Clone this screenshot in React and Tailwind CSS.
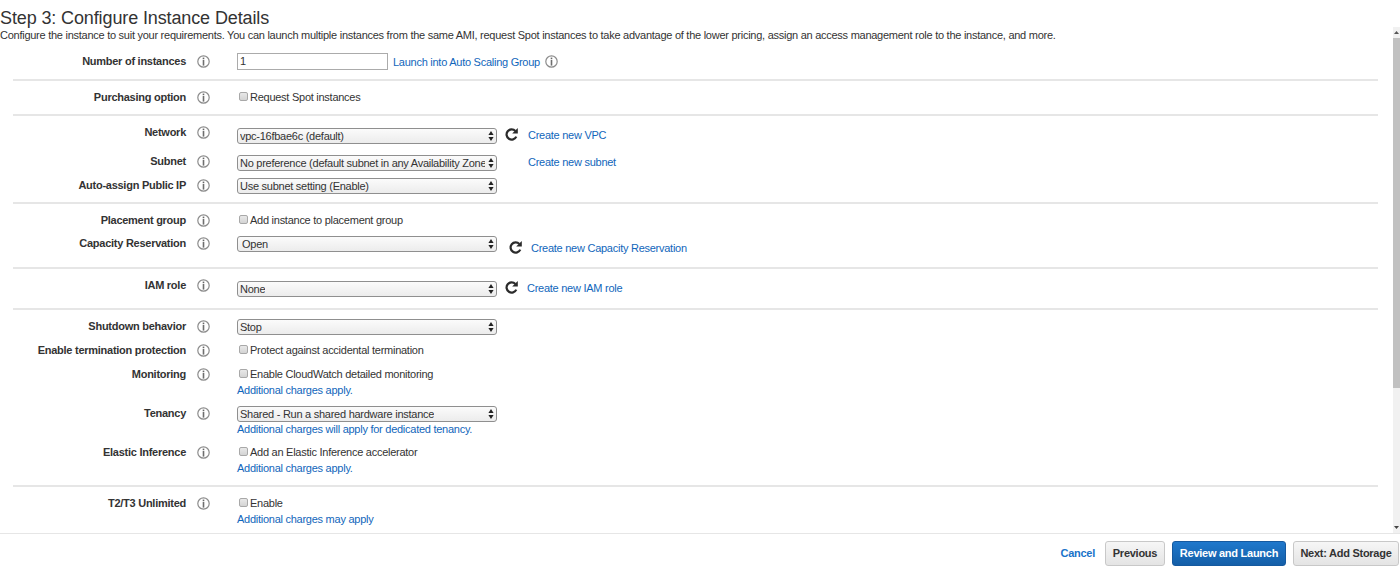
const ff = "font-['Liberation_Sans',Arial,sans-serif]";
const small = 'text-[11px] tracking-[-0.26px]';

function Info({ className = '' }) {
  return (
    <svg width="13" height="13" viewBox="0 0 13 13" className={`shrink-0 ${className}`}>
      <circle cx="6.5" cy="6.5" r="5.7" fill="#fff" stroke="#8c8c8c" strokeWidth="1.2" />
      <rect x="5.7" y="2.6" width="1.6" height="1.6" fill="#666" />
      <rect x="5.7" y="5" width="1.6" height="5.6" fill="#6e6e6e" />
    </svg>
  );
}

function Refresh({ className = '' }) {
  return (
    <svg width="15" height="15" viewBox="0 0 15 15" className={`shrink-0 ${className}`} fill="none">
      <path d="M12.3 9.6A5.1 5.1 0 1 1 11.4 4" stroke="#2b2b2b" strokeWidth="2.2" />
      <path d="M13.8 1v5.6H8.2z" fill="#2b2b2b" />
    </svg>
  );
}

function Row({ label, className = '', children }) {
  return (
    <div className={`flex items-start ${className}`}>
      <div className={`w-[173px] shrink-0 text-right font-bold leading-4 text-[#333] ${small}`}>{label}</div>
      <div className="w-[51px] shrink-0 pt-[2px] pl-[11px]"><Info /></div>
      <div className="min-w-0 flex-1">{children}</div>
    </div>
  );
}

function Check({ text }) {
  return (
    <label className={`flex h-4 items-center leading-4 text-[#333] ${small}`}>
      <span className="mr-[2px] ml-[2px] -mt-[2px] h-[9px] w-[9px] rounded-[2px] border border-[#a8a8a8] bg-gradient-to-b from-[#e8e8e8] to-[#d4d4d4]" />
      {text}
    </label>
  );
}

function Sel({ value, wide }) {
  return (
    <div className={`flex h-[16px] w-[260px] shrink-0 items-center justify-between overflow-hidden rounded-[3px] border border-[#8f8f8f] bg-gradient-to-b from-[#fbfbfb] to-[#ececec] pr-[2px] leading-4 text-[#333] ${wide ? 'pl-[4px]' : 'pl-[2px]'} ${small}`}>
      <span className="-mt-[1px] overflow-hidden whitespace-nowrap">{value}</span>
      <svg width="6" height="10" viewBox="0 0 6 10" className="ml-[3px] shrink-0">
        <path d="M3 0l2.6 4H.4zM3 10l2.6-4H.4z" fill="#222" />
      </svg>
    </div>
  );
}

function Link({ children, className = '' }) {
  return <a className={`block leading-4 whitespace-nowrap text-[#1166bb] ${small} ${className}`}>{children}</a>;
}

function Section({ children, className = 'pb-[9px]', last }) {
  return <div className={`pt-[8px] ${className} ${last ? '' : 'border-b-2 border-[#e6e6e6]'}`}>{children}</div>;
}

export default function App() {
  return (
    <div className={`flex h-[568px] w-[1400px] flex-col overflow-hidden bg-white ${ff}`}>
      <div className="flex min-h-0 flex-1">
        <div className="min-w-0 flex-1">
          <h1 className="mt-[7px] text-[18px] leading-[22px] tracking-[-0.12px] text-[#333]">Step 3: Configure Instance Details</h1>
          <p className={`-mt-[1px] leading-[14px] whitespace-nowrap text-[#333] ${small}`}>
            Configure the instance to suit your requirements. You can launch multiple instances from the same AMI, request Spot instances to take advantage of the lower pricing, assign an access management role to the instance, and more.
          </p>
          <div className="mr-[15px] ml-[13px]">
            <Section className="pt-[11px] pb-[9px]">
              <Row label="Number of instances">
                <div className="flex items-center">
                  <div className="h-[17px] w-[151px] border border-[#ababab] px-[2px] text-[11px] leading-[15px] text-[#333]">1</div>
                  <Link className="ml-[5px]">Launch into Auto Scaling Group</Link>
                  <Info className="ml-[5px]" />
                </div>
              </Row>
            </Section>
            <Section>
              <Row label="Purchasing option"><Check text="Request Spot instances" /></Row>
            </Section>
            <Section className="pb-[8px]">
              <Row label="Network">
                <div className="flex items-start pt-[4px]">
                  <Sel value="vpc-16fbae6c (default)" />
                  <Refresh className="-mt-[1px] ml-[7px]" />
                  <Link className="-mt-[1px] ml-[9px]">Create new VPC</Link>
                </div>
              </Row>
              <Row label="Subnet" className="mt-[9px]">
                <div className="flex items-start pt-[2px]">
                  <Sel value="No preference (default subnet in any Availability Zone)" />
                  <Link className="ml-[31px] -mt-[1px]">Create new subnet</Link>
                </div>
              </Row>
              <Row label="Auto-assign Public IP" className="mt-[6px]">
                <div className="pt-[1px]"><Sel value="Use subnet setting (Enable)" /></div>
              </Row>
            </Section>
            <Section className="pb-[11px]">
              <Row label="Placement group"><Check text="Add instance to placement group" /></Row>
              <Row label="Capacity Reservation" className="mt-[7px]">
                <div className="flex items-start pt-[1px]">
                  <Sel value="Open" wide />
                  <Refresh className="mt-[4px] ml-[11px]" />
                  <Link className="mt-[4px] ml-[8px]">Create new Capacity Reservation</Link>
                </div>
              </Row>
            </Section>
            <Section className="pb-[11px]">
              <Row label="IAM role">
                <div className="flex items-start pt-[4px]">
                  <Sel value="None" />
                  <Refresh className="-mt-[1px] ml-[7px]" />
                  <Link className="-mt-[1px] ml-[8px]">Create new IAM role</Link>
                </div>
              </Row>
            </Section>
            <Section>
              <Row label="Shutdown behavior">
                <div className="pt-[1px]"><Sel value="Stop" /></div>
              </Row>
              <Row label="Enable termination protection" className="mt-[7px]"><Check text="Protect against accidental termination" /></Row>
              <Row label="Monitoring" className="mt-[8px]">
                <Check text="Enable CloudWatch detailed monitoring" />
                <Link>Additional charges apply.</Link>
              </Row>
              <Row label="Tenancy" className="mt-[7px]">
                <div className="pt-[1px]"><Sel value="Shared - Run a shared hardware instance" /></div>
                <Link className="-mt-[1px]">Additional charges will apply for dedicated tenancy.</Link>
              </Row>
              <Row label="Elastic Inference" className="mt-[7px]">
                <Check text="Add an Elastic Inference accelerator" />
                <Link>Additional charges apply.</Link>
              </Row>
            </Section>
            <Section last>
              <Row label="T2/T3 Unlimited">
                <Check text="Enable" />
                <Link>Additional charges may apply</Link>
              </Row>
            </Section>
          </div>
        </div>
        <div className="mt-[27px] flex w-[7px] shrink-0 flex-col bg-[#f1f1f1]">
          <div className="flex h-[11px] items-center justify-center">
            <svg width="5" height="3" viewBox="0 0 5 3"><path d="M2.5 0L5 3H0z" fill="#555" /></svg>
          </div>
          <div className="h-[350px] bg-[#c1c1c1]" />
          <div className="flex-1" />
          <div className="flex h-[11px] items-center justify-center">
            <svg width="5" height="3" viewBox="0 0 5 3"><path d="M0 0h5L2.5 3z" fill="#444" /></svg>
          </div>
        </div>
      </div>
      <div className="flex h-[35px] shrink-0 items-start justify-end gap-[7px] border-t border-[#e6e6e6] pt-[7px] pr-[1px]">
        <a className={`mr-[3px] font-bold leading-[25px] text-[#1a73c9] ${small}`}>Cancel</a>
        <button className={`h-[25px] w-[60px] rounded-[3px] border border-[#c8c8c8] bg-gradient-to-b from-[#f6f6f6] to-[#e4e4e4] font-bold text-[#333] ${small}`}>Previous</button>
        <button className={`h-[25px] w-[114px] rounded-[3px] border border-[#15599f] bg-gradient-to-b from-[#1f78cc] to-[#145fa8] font-bold text-white ${small}`}>Review and Launch</button>
        <button className={`h-[25px] w-[106px] rounded-[3px] border border-[#c8c8c8] bg-gradient-to-b from-[#f6f6f6] to-[#e4e4e4] font-bold text-[#333] ${small}`}>Next: Add Storage</button>
      </div>
    </div>
  );
}
